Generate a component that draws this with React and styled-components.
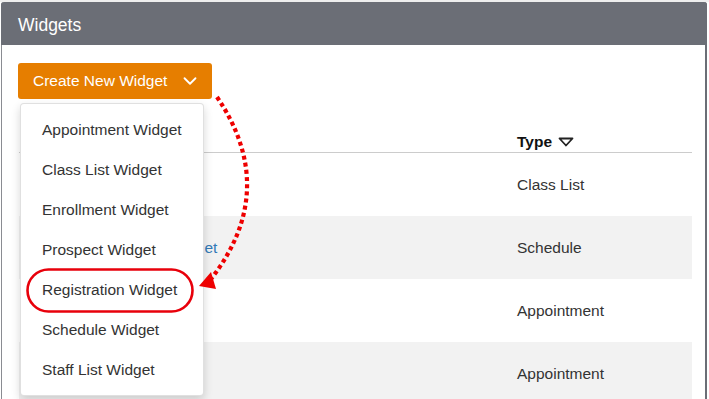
import React from "react";
import styled, { createGlobalStyle } from "styled-components";
import { ChevronDown } from "lucide-react";

const Global = createGlobalStyle`
  html, body { margin: 0; padding: 0; background: #ffffff; }
  body { font-family: "Liberation Sans", Arial, sans-serif; color: #333; }
  #root { width: 709px; height: 399px; overflow: hidden; }
`;

const Page = styled.div`
  position: relative;
  width: 709px;
  height: 399px;
  padding: 2px 0 0 1px;
  box-sizing: border-box;
  background: linear-gradient(#eeeeee 0 2px, #ffffff 2px);
  overflow: hidden;
`;

const Panel = styled.section`
  width: 706px;
  height: 420px;
  box-sizing: border-box;
  border-left: 1px solid #8a8c92;
  border-right: 2px solid #6b6e76;
  border-radius: 3px 3px 0 0;
  background: #fff;
  display: flex;
  flex-direction: column;
`;

const Header = styled.header`
  height: 43px;
  flex: none;
  box-sizing: border-box;
  background: #6b6e76;
  color: #fff;
  font-size: 17.5px;
  display: flex;
  align-items: center;
  padding: 3px 0 0 17px;
  margin: 0 -2px 0 -1px;
  border-radius: 3px 3px 0 0;
`;

const Body = styled.div`
  padding: 18px 12px 0 16px;
  display: flex;
  flex-direction: column;
`;

const ButtonWrap = styled.div`
  position: relative;
  align-self: flex-start;
  z-index: 2;
`;

const OrangeButton = styled.button`
  height: 36px;
  width: 194px;
  box-sizing: border-box;
  border: none;
  border-radius: 3px;
  background: #e67e00;
  color: #fff;
  font-family: inherit;
  font-size: 15.5px;
  display: flex;
  align-items: center;
  padding: 0 0 0 15px;
  cursor: pointer;
  span { flex: 1; text-align: left; }
  svg { margin-right: 11px; }
`;

const Menu = styled.ul`
  position: absolute;
  left: 2px;
  top: 40px;
  width: 184px;
  margin: 0;
  padding: 6px 0 5px;
  list-style: none;
  box-sizing: border-box;
  background: #fff;
  border: 1px solid rgba(0, 0, 0, 0.12);
  border-radius: 4px;
  box-shadow: 0 4px 10px rgba(0, 0, 0, 0.16);
`;

const MenuItem = styled.li`
  height: 40px;
  display: flex;
  align-items: center;
  padding-left: 21px;
  font-size: 15.5px;
  color: #333;
  white-space: nowrap;
`;

const Table = styled.div`
  margin-top: 18px;
  margin-left: 1px;
  width: 673px;
`;

const HeadRow = styled.div`
  display: grid;
  grid-template-columns: 490px 1fr;
  height: 36px;
  align-items: end;
  border-bottom: 1px solid #cccccc;
  box-sizing: border-box;
`;

const HeadCell = styled.div`
  font-weight: bold;
  font-size: 15.5px;
  color: #111;
  padding: 0 8px 1px;
  display: flex;
  align-items: center;
  gap: 6px;
  line-height: 18px;
`;

const Row = styled.div`
  display: grid;
  grid-template-columns: 490px 1fr;
  height: 63px;
  align-items: center;
  background: ${(p) => (p.$alt ? "#f2f2f2" : "#ffffff")};
`;

const Cell = styled.div`
  font-size: 15.5px;
  color: #333;
  padding: 0 8px;
  white-space: nowrap;
`;

const NameLink = styled.a`
  color: #337ab7;
  text-decoration: none;
`;

const Overlay = styled.svg`
  position: absolute;
  left: 0;
  top: 0;
  pointer-events: none;
  z-index: 5;
`;

const SortDown = () => (
  <svg width="16" height="10" viewBox="0 0 16 10">
    <path d="M1.5 1.5 H14.5 L8 8.5 Z" fill="none" stroke="#222" strokeWidth="1.8" strokeLinejoin="round" />
  </svg>
);

const items = [
  "Appointment Widget",
  "Class List Widget",
  "Enrollment Widget",
  "Prospect Widget",
  "Registration Widget",
  "Schedule Widget",
  "Staff List Widget",
];

const rows = [
  { name: "Class List", type: "Class List" },
  { name: "Our Class Schedule Widget", type: "Schedule" },
  { name: "Booking", type: "Appointment" },
  { name: "Intro", type: "Appointment" },
];

export default function App() {
  return (
    <>
      <Global />
      <Page>
        <Panel>
          <Header>Widgets</Header>
          <Body>
            <ButtonWrap>
              <OrangeButton>
                <span>Create New Widget</span>
                <ChevronDown size={22} strokeWidth={2} />
              </OrangeButton>
              <Menu>
                {items.map((t) => (
                  <MenuItem key={t}>{t}</MenuItem>
                ))}
              </Menu>
            </ButtonWrap>
            <Table>
              <HeadRow>
                <HeadCell>Name</HeadCell>
                <HeadCell>
                  Type <SortDown />
                </HeadCell>
              </HeadRow>
              {rows.map((r, i) => (
                <Row key={i} $alt={i % 2 === 1}>
                  <Cell>
                    <NameLink href="#">{r.name}</NameLink>
                  </Cell>
                  <Cell>{r.type}</Cell>
                </Row>
              ))}
            </Table>
          </Body>
        </Panel>
        <Overlay width="709" height="399" viewBox="0 0 709 399">
          <rect x="27.5" y="269.5" width="165" height="42" rx="21" fill="none" stroke="#e8000b" strokeWidth="2.6" />
          <path d="M217 97 Q280 190 211 279" fill="none" stroke="#ee0000" strokeWidth="4.2" strokeDasharray="4 3.2" />
          <path d="M199 286 L211 272 L216 289 Z" fill="#ee0000" />
        </Overlay>
      </Page>
    </>
  );
}
